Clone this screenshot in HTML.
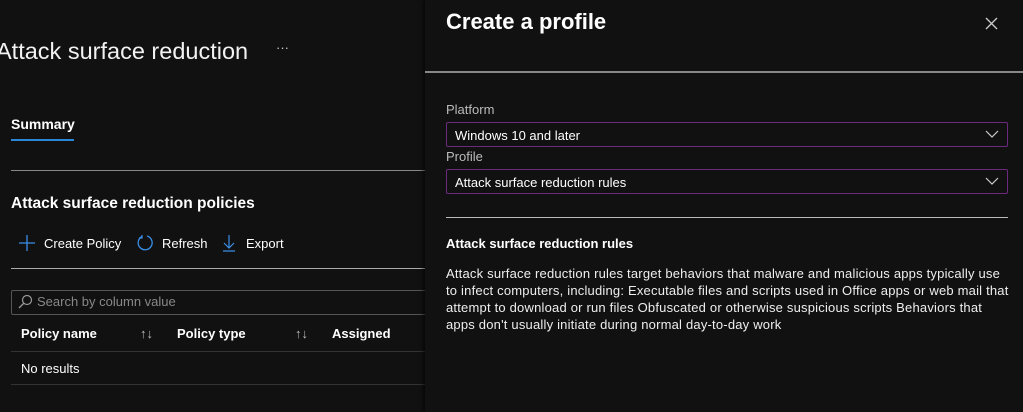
<!DOCTYPE html>
<html><head><style>
*{margin:0;padding:0;box-sizing:border-box}
body{width:1023px;height:412px;overflow:hidden;background:#111;font-family:"Liberation Sans",sans-serif;color:#fff;position:relative}
.a{position:absolute;white-space:nowrap}
.line{position:absolute;height:1px;background:#8a8a8a}
.sel{position:absolute;left:446px;width:562px;height:25px;border:1px solid #6b2a7e;border-radius:2px;font-size:13px;padding:5px 8px;color:#fff}
.sel svg{position:absolute;right:8px;top:7px}
</style></head><body>
<div class="a" style="left:-4px;top:38px;font-size:23.5px;color:#f2f2f2">Attack surface reduction</div>
<div class="a" style="left:276px;top:40px;font-size:13px;color:#ccc">···</div>
<div class="a" style="left:11px;top:116px;font-size:14px;font-weight:bold">Summary</div>
<div style="position:absolute;left:11px;top:139px;width:63px;height:2px;background:#2b88d8"></div>
<div class="line" style="left:11px;top:170px;width:414px;background:#888"></div>
<div class="a" style="left:11px;top:195px;font-size:15.5px;font-weight:bold;letter-spacing:0px">Attack surface reduction policies</div>
<svg class="a" style="left:18px;top:234px" width="18" height="18"><path d="M9 1v16M1 9h16" stroke="#3a8ee6" stroke-width="1.3"/></svg>
<div class="a" style="left:44px;top:236px;font-size:13px">Create Policy</div>
<svg class="a" style="left:136px;top:234px" width="18" height="18"><path d="M6 2.5A7 7 0 1 0 11 2" fill="none" stroke="#3a8ee6" stroke-width="1.3"/><path d="M6 1v3h-3" fill="none" stroke="#3a8ee6" stroke-width="1.2"/></svg>
<div class="a" style="left:162px;top:236px;font-size:13px">Refresh</div>
<svg class="a" style="left:222px;top:234px" width="14" height="18"><path d="M7 1v13M2 9l5 5 5-5M1 17h12" fill="none" stroke="#3a8ee6" stroke-width="1.2"/></svg>
<div class="a" style="left:246px;top:236px;font-size:13px">Export</div>
<div class="line" style="left:11px;top:268px;width:414px;background:#aaa"></div>
<div style="position:absolute;left:11px;top:290px;width:420px;height:25px;border:1px solid #555;border-radius:2px"></div>
<svg class="a" style="left:17px;top:294px" width="16" height="16"><circle cx="10" cy="6" r="4.5" fill="none" stroke="#999" stroke-width="1.2"/><path d="M7 9l-5 5" stroke="#999" stroke-width="1.3"/></svg>
<div class="a" style="left:37px;top:294px;font-size:13px;color:#888">Search by column value</div>
<div class="a" style="left:21px;top:326px;font-size:13px;font-weight:bold">Policy name</div>
<div class="a" style="left:140px;top:326px;font-size:13px;color:#bbb">↑↓</div>
<div class="a" style="left:177px;top:326px;font-size:13px;font-weight:bold">Policy type</div>
<div class="a" style="left:295px;top:326px;font-size:13px;color:#bbb">↑↓</div>
<div class="a" style="left:332px;top:326px;font-size:13px;font-weight:bold">Assigned</div>
<div class="line" style="left:11px;top:351px;width:414px;background:#333"></div>
<div class="a" style="left:21px;top:361px;font-size:13px">No results</div>
<div class="line" style="left:11px;top:384px;width:414px;background:#333"></div>

<div style="position:absolute;left:425px;top:0;width:598px;height:412px;background:#111;box-shadow:-2px 0 4px rgba(0,0,0,.6)"></div>
<div class="a" style="left:446px;top:9px;font-size:22px;font-weight:bold;color:#fff">Create a profile</div>
<svg class="a" style="left:985px;top:17px" width="13" height="13"><path d="M1 1l11 11M12 1L1 12" stroke="#ccc" stroke-width="1.3"/></svg>
<div class="line" style="left:425px;top:71px;width:598px;background:#888;height:2px"></div>
<div class="a" style="left:446px;top:102px;font-size:13px;color:#bbb">Platform</div>
<div class="sel" style="top:122px">Windows 10 and later<svg width="14" height="9"><path d="M1 1l6 6 6-6" fill="none" stroke="#ccc" stroke-width="1.2"/></svg></div>
<div class="a" style="left:446px;top:149px;font-size:13px;color:#bbb">Profile</div>
<div class="sel" style="top:169px">Attack surface reduction rules<svg width="14" height="9"><path d="M1 1l6 6 6-6" fill="none" stroke="#ccc" stroke-width="1.2"/></svg></div>
<div class="line" style="left:446px;top:217px;width:562px;background:#bbb"></div>
<div class="a" style="left:446px;top:236px;font-size:13px;font-weight:bold">Attack surface reduction rules</div>
<div style="position:absolute;left:446px;top:265px;width:568px;font-size:13px;line-height:17px;color:#eee;letter-spacing:0.2px">Attack surface reduction rules target behaviors that malware and malicious apps typically use to infect computers, including: Executable files and scripts used in Office apps or web mail that attempt to download or run files Obfuscated or otherwise suspicious scripts Behaviors that apps don't usually initiate during normal day-to-day work</div>
</body></html>
